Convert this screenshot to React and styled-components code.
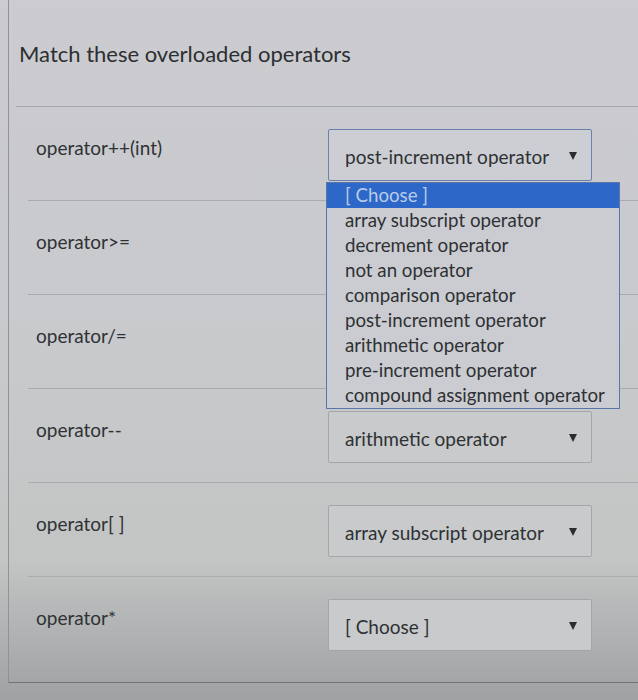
import React from "react";
import styled, { createGlobalStyle } from "styled-components";

const Global = createGlobalStyle`
  html, body { margin: 0; padding: 0; }
  body {
    background: #a9abaf;
    font-family: Lato, "Open Sans", "Liberation Sans", sans-serif;
  }
`;

const Screen = styled.div`
  width: 638px;
  height: 700px;
  overflow: hidden;
  background: linear-gradient(180deg, #cbcbd0 0%, #c9cacd 45%, #c2c5c4 80%, #9fa1a3 100%);
  color: #303334;
`;

const Panel = styled.div`
  margin-left: 8px;
  height: 683px;
  box-sizing: border-box;
  border-left: 1px solid #8f9396;
  border-bottom: 1px solid #6f7375;
`;

const Header = styled.div`
  margin-left: 7px;
  height: 107px;
  box-sizing: border-box;
  padding: 40px 0 0 3px;
  border-bottom: 1px solid #a4a7aa;
`;

const Title = styled.h1`
  margin: 0;
  font-weight: 400;
  font-size: 22px;
  line-height: 28px;
  color: #2c2f31;
`;

const Rows = styled.div`
  margin-left: 19px;
`;

const Row = styled.div`
  position: relative;
  display: flex;
  justify-content: space-between;
  align-items: flex-start;
  height: ${(p) => (p.$last ? "105px" : "94px")};
  box-sizing: border-box;
  padding: 22px 46px 0 8px;
  border-bottom: ${(p) => (p.$last ? "none" : "1px solid #a9acae")};
`;

const Label = styled.div`
  padding-top: 7px;
  font-size: 19px;
  line-height: 24px;
  color: #2f3234;
`;

const SelectWrap = styled.div`
  position: relative;
  width: 264px;
`;

const SelectBox = styled.div`
  height: 52px;
  box-sizing: border-box;
  display: flex;
  align-items: center;
  justify-content: space-between;
  padding: 2px 14px 0 16px;
  border: 1px solid ${(p) => (p.$focused ? "#6a80ad" : "#a3a7aa")};
  border-radius: 2px;
  background: ${(p) => (p.$focused ? "#cdced3" : "#c8cacc")};
  font-size: 19px;
  color: #2e3133;
`;

const Arrow = styled.span`
  width: 0;
  height: 0;
  border-left: 4px solid transparent;
  border-right: 4px solid transparent;
  border-top: 8px solid #2a2d30;
`;

const Menu = styled.ul`
  position: absolute;
  top: 53px;
  left: -2px;
  width: 294px;
  margin: 0;
  padding: 0;
  list-style: none;
  box-sizing: border-box;
  border: 1px solid #5a76a8;
  background: #cbccd1;
  z-index: 2;
`;

const Item = styled.li`
  height: 25px;
  line-height: 25px;
  padding-left: 18px;
  font-size: 18.7px;
  white-space: nowrap;
  color: ${(p) => (p.$active ? "#b9cbea" : "#2e3133")};
  background: ${(p) => (p.$active ? "#2d67c8" : "transparent")};
`;

const options = [
  "[ Choose ]",
  "array subscript operator",
  "decrement operator",
  "not an operator",
  "comparison operator",
  "post-increment operator",
  "arithmetic operator",
  "pre-increment operator",
  "compound assignment operator",
];

const rows = [
  { label: "operator++(int)", value: "post-increment operator", open: true },
  { label: "operator>=", value: null },
  { label: "operator/=", value: null },
  { label: "operator--", value: "arithmetic operator" },
  { label: "operator[ ]", value: "array subscript operator" },
  { label: "operator*", value: "[ Choose ]" },
];

export default function App() {
  return (
    <>
      <Global />
      <Screen>
        <Panel>
          <Header>
            <Title>Match these overloaded operators</Title>
          </Header>
          <Rows>
            {rows.map((r, i) => (
              <Row key={i} $last={i === rows.length - 1}>
                <Label>{r.label}</Label>
                {r.value && (
                  <SelectWrap>
                    <SelectBox $focused={r.open}>
                      <span>{r.value}</span>
                      <Arrow />
                    </SelectBox>
                    {r.open && (
                      <Menu>
                        {options.map((o, j) => (
                          <Item key={o} $active={j === 0}>
                            {o}
                          </Item>
                        ))}
                      </Menu>
                    )}
                  </SelectWrap>
                )}
              </Row>
            ))}
          </Rows>
        </Panel>
      </Screen>
    </>
  );
}
